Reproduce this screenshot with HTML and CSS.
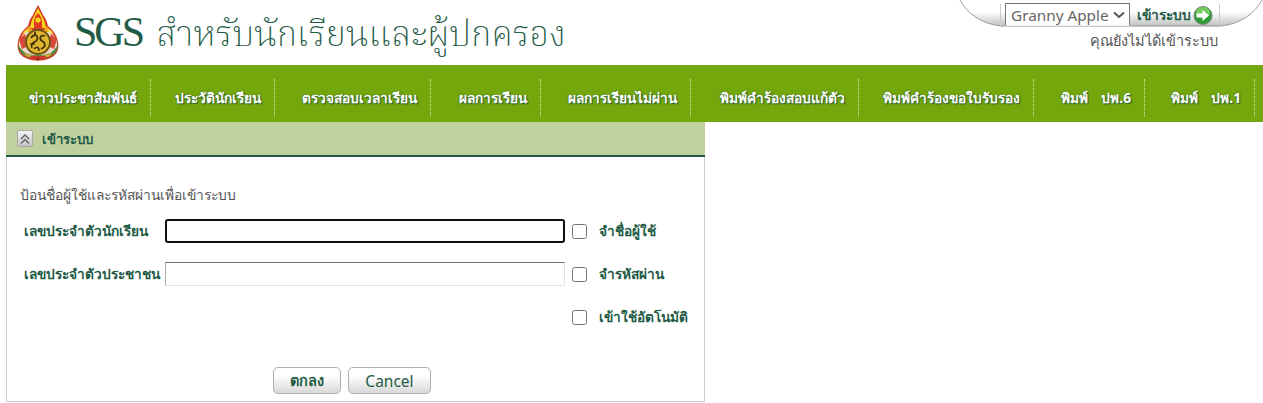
FILE: index.html
```html
<!DOCTYPE html>
<html lang="th">
<head>
<meta charset="utf-8">
<title>SGS สำหรับนักเรียนและผู้ปกครอง</title>
<link rel="stylesheet" href="styles.css">
</head>
<body>
<header class="top">
  <div class="brand">
    <svg class="logo" viewBox="0 0 44 56" width="44" height="56" aria-hidden="true">
      <path d="M22 0 C24 4 26 7 27 10 C30 13 31 17 32 21 C37 25 41 30 42 37 C44 46 39 52 32 54 C26 56 18 56 12 54 C5 52 0 46 2 37 C3 30 7 25 12 21 C13 17 14 13 17 10 C18 7 20 4 22 0Z" fill="#cf3f28"/>
      <path d="M22 3 C24 7 25 9 26 11 C28 14 29 18 30 23 L14 23 C15 18 16 14 18 11 C19 9 20 7 22 3Z" fill="#f9d71e"/>
      <path d="M22 8 C24 10 26 13 26 17 L26 23 L18 23 L18 17 C18 13 20 10 22 8Z" fill="#e23a22"/>
      <circle cx="22" cy="15" r="2.6" fill="#f9d71e"/>
      <path d="M9 25 L14 21 L16 25 L28 25 L30 21 L35 25 L38 31 L6 31Z" fill="#f5a520"/>
      <path d="M7 27 L13 24 L10 31Z M37 27 L31 24 L34 31Z" fill="#f3e04a"/>
      <path d="M3 38 C4 32 7 29 11 27 L33 27 C37 29 40 32 41 38 C42 46 37 50 22 51 C7 50 2 46 3 38Z" fill="#efd8c8"/>
      <path d="M3 34 L9 29 L12 41 L6 44Z M41 34 L35 29 L32 41 L38 44Z" fill="#d5493a"/>
      <path d="M2 40 C2 48 9 53 22 54 C35 53 42 48 42 40 L38 45 C33 50 27 50 22 50 C17 50 11 50 6 45Z" fill="#4f8a3f"/>
      <path d="M8 47 C12 50 17 51 22 51 C27 51 32 50 36 47 L34 51 C30 53 14 53 10 51Z" fill="#d9a93a"/>
      <path d="M14 51 L30 51 L28 54 L16 54Z" fill="#d0342e"/>
      <circle cx="22" cy="37" r="13" fill="#6d5315"/>
      <circle cx="22" cy="37" r="11" fill="#e2b62d"/>
      <path d="M15 33 C18 28 23 30 21 35 C19 38 14 37 16 43 M29 31 C24 29 23 34 26 36 C30 38 30 42 25 44 M18 44 C21 41 23 42 23 46 M19 27 V30 M14 39 H19" fill="none" stroke="#3e3010" stroke-width="1.7"/>
      <circle cx="22" cy="54" r="1.5" fill="#8a2a20"/>
    </svg>
    <h1 class="site-title"><span class="sgs">SGS</span> สำหรับนักเรียนและผู้ปกครอง</h1>
  </div>
  <div class="session">
    <svg class="tab-arc" viewBox="0 0 304 27" width="304" height="27" aria-hidden="true">
      <defs>
        <linearGradient id="tabShade" x1="0" y1="0" x2="0" y2="1">
          <stop offset="0" stop-color="#fff"/>
          <stop offset=".45" stop-color="#fff"/>
          <stop offset="1" stop-color="#bfc2bf"/>
        </linearGradient>
      </defs>
      <path d="M1 0 C8 13 22 24 42 26 L262 26 C282 24 296 13 303 0Z" fill="url(#tabShade)"/>
      <path d="M1 0 C8 13 22 24 42 26 M262 26 C282 24 296 13 303 0" fill="none" stroke="#9a9d9a" stroke-width="1"/>
      <path d="M42 26 H262" stroke="#8f928f" stroke-width="1"/>
      <path d="M41.5 4 V26 M260.5 4 V26" stroke="#c9ccc9" stroke-width="1"/>
    </svg>
    <div class="login-row">
      <select class="theme"><option>Granny Apple</option></select>
      <a class="login-link" href="#">เข้าระบบ
        <svg viewBox="0 0 20 20" width="20" height="20" aria-hidden="true">
          <circle cx="10" cy="10.5" r="9" fill="#2f9d35" stroke="#7d857d" stroke-width="1"/>
          <ellipse cx="10" cy="7.5" rx="7" ry="5.5" fill="#8fe070" opacity=".7"/>
          <path d="M3.5 8.5 H9.5 V5 L16 10.5 L9.5 16 V12.5 H3.5Z" fill="#fff"/>
        </svg>
      </a>
    </div>
    <p class="status">คุณยังไม่ได้เข้าระบบ</p>
  </div>
</header>

<nav class="menu">
  <a href="#">ข่าวประชาสัมพันธ์</a>
  <a href="#">ประวัตินักเรียน</a>
  <a href="#">ตรวจสอบเวลาเรียน</a>
  <a href="#">ผลการเรียน</a>
  <a href="#">ผลการเรียนไม่ผ่าน</a>
  <a href="#">พิมพ์คำร้องสอบแก้ตัว</a>
  <a href="#">พิมพ์คำร้องขอใบรับรอง</a>
  <a href="#">พิมพ์ ปพ.6</a>
  <a href="#">พิมพ์ ปพ.1</a>
</nav>

<section class="panel">
  <div class="panel-head">
    <span class="collapse">
      <svg viewBox="0 0 12 12" width="12" height="12" aria-hidden="true">
        <path d="M2 6 L6 2 L10 6 M2 10.5 L6 6.5 L10 10.5" fill="none" stroke="#5f5f5f" stroke-width="1.3"/>
      </svg>
    </span>
    <span class="panel-title">เข้าระบบ</span>
  </div>
  <form class="panel-body">
    <p class="hint">ป้อนชื่อผู้ใช้และรหัสผ่านเพื่อเข้าระบบ</p>
    <div class="fields">
      <label class="field-label" for="sid">เลขประจำตัวนักเรียน</label>
      <input class="text focus" id="sid" type="text">
      <input class="check" id="r1" type="checkbox">
      <label class="check-label" for="r1">จำชื่อผู้ใช้</label>

      <label class="field-label" for="cid">เลขประจำตัวประชาชน</label>
      <input class="text" id="cid" type="text">
      <input class="check" id="r2" type="checkbox">
      <label class="check-label" for="r2">จำรหัสผ่าน</label>

      <span></span><span></span>
      <input class="check" id="r3" type="checkbox">
      <label class="check-label" for="r3">เข้าใช้อัตโนมัติ</label>
    </div>
    <div class="actions">
      <button type="button" class="btn ok">ตกลง</button>
      <button type="button" class="btn cancel">Cancel</button>
    </div>
  </form>
</section>
</body>
</html>
```

FILE: styles.css
```css
* { box-sizing: border-box; }
html, body { margin: 0; padding: 0; }
body {
  width: 1263px;
  height: 403px;
  overflow: hidden;
  background: #fff;
  font-family: "Noto Sans", "Liberation Sans", sans-serif;
  font-size: 14px;
  color: #555;
}
.top {
  height: 65px;
  display: flex;
  justify-content: space-between;
  align-items: flex-start;
}
.brand {
  display: flex;
  align-items: flex-start;
  padding: 5px 0 0 16px;
  gap: 14px;
}
.logo { display: block; }
.site-title {
  margin: 2px 0 0;
  font-family: "Noto Serif Thai", "Noto Sans", sans-serif;
  font-weight: 200;
  font-size: 35.3px;
  line-height: 50px;
  color: #1f5b46;
  white-space: nowrap;
}
.sgs {
  font-family: "Liberation Serif", serif;
  font-weight: 400;
  font-size: 42px;
  letter-spacing: -3px;
  margin-right: 5px;
}
.session {
  position: relative;
  width: 304px;
  display: flex;
  flex-direction: column;
  align-items: flex-end;
}
.tab-arc {
  position: absolute;
  left: 0;
  top: 0;
  display: block;
}
.login-row {
  position: relative;
  display: flex;
  align-items: center;
  height: 23px;
  margin-top: 3px;
  width: 255px;
  align-self: flex-start;
  margin-left: 46px;
}
.theme {
  appearance: none;
  width: 125px;
  height: 23px;
  border: 1px solid #767676;
  border-bottom-color: #eee;
  background: #fff url("data:image/svg+xml,%3Csvg xmlns='http://www.w3.org/2000/svg' width='12' height='8'%3E%3Cpath d='M1 1.5 L6 6 L11 1.5' fill='none' stroke='%23555' stroke-width='2'/%3E%3C/svg%3E") no-repeat right 4px center;
  color: #666;
  font-family: "Noto Sans", sans-serif;
  font-size: 15.3px;
  padding: 0 0 0 5px;
  border-radius: 0;
}
.login-link {
  display: flex;
  align-items: center;
  gap: 2px;
  margin-left: 7px;
  font-size: 13.8px;
  font-weight: 700;
  color: #1f5b46;
  text-decoration: none;
  white-space: nowrap;
}
.status {
  position: relative;
  margin: 4px 45px 0 0;
  font-size: 14.5px;
  line-height: 20px;
  color: #555;
  white-space: nowrap;
}
.menu {
  margin-left: 6px;
  height: 57px;
  background: #74a70c;
  display: grid;
  grid-template-columns: 145px 124px 156px 110px 150px 168px 175px 111px 110px;
  align-content: start;
  padding-top: 14px;
}
.menu a {
  height: 38px;
  display: flex;
  align-items: center;
  justify-content: flex-end;
  padding-right: 13px;
  border-right: 1px dotted #d5e3ae;
  color: #fff;
  font-weight: 700;
  font-size: 13.7px;
  word-spacing: 10px;
  text-shadow: 0 0 2px #3d6b10, 1px 1px 1px #1f5b46;
  text-decoration: none;
  white-space: nowrap;
}
.panel {
  margin-left: 6px;
  width: 699px;
}
.panel-head {
  height: 35px;
  background: #c0d19e;
  border-bottom: 2px solid #1f5b46;
  display: flex;
  align-items: center;
  padding-left: 11px;
  gap: 9px;
}
.collapse {
  width: 16px;
  height: 17px;
  background: linear-gradient(#f4f4f4, #c4c4c4);
  border: 1px solid #a8a8a8;
  border-radius: 2px;
  display: flex;
  align-items: center;
  justify-content: center;
}
.panel-title {
  font-weight: 700;
  font-size: 13.2px;
  line-height: 20px;
  padding-top: 1px;
  color: #1f5b46;
}
.panel-body {
  height: 245px;
  border: 1px solid #ccc;
  border-top: 0;
  padding: 28px 0 0 13px;
}
.hint {
  margin: 0 0 14px;
  font-size: 13.85px;
  line-height: 20px;
  color: #555;
}
.fields {
  display: grid;
  grid-template-columns: 142px 400px 22px auto;
  grid-auto-rows: 24px;
  row-gap: 19px;
  align-items: center;
  padding-left: 3px;
}
.field-label, .check-label {
  font-weight: 700;
  font-size: 13.7px;
  color: #1f5b46;
  white-space: nowrap;
}
.field-label { margin-left: 1px; }
.check-label { margin-left: 12px; }
.text {
  width: 400px;
  height: 24px;
  border: 1px solid #e3e3e3;
  border-top-color: #767676;
  border-left-color: #aaa;
  background: #fff;
  padding: 0;
  outline: none;
}
.text.focus {
  border: 2px solid #101010;
  border-radius: 3px;
}
.check {
  width: 15px;
  height: 15px;
  margin: 0 0 0 7px;
}
.actions {
  display: flex;
  justify-content: center;
  gap: 7px;
  margin-top: 38px;
  padding-right: 20px;
}
.btn {
  height: 27px;
  background: linear-gradient(#fff 30%, #d8d8d8);
  border: 1px solid #b0b0b0;
  border-radius: 5px;
  color: #1f5b46;
  font-family: "Noto Sans", sans-serif;
  font-size: 15.5px;
  padding: 0;
}
.btn.ok { width: 68px; font-size: 14.5px; font-weight: 700; }
.btn.cancel { width: 83px; }
```
